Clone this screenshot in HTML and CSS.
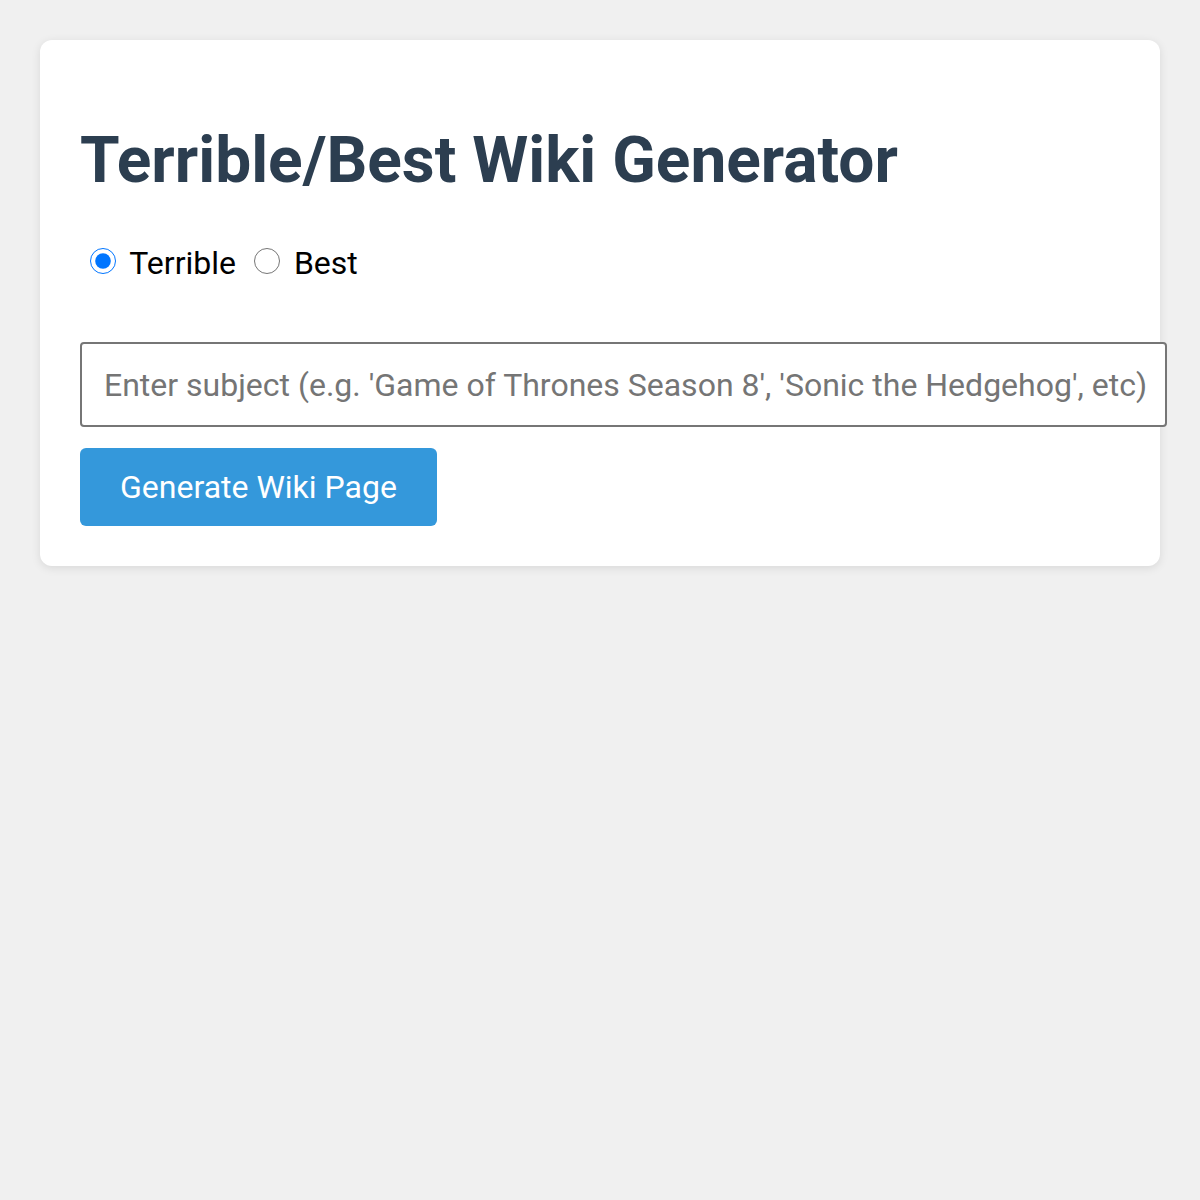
FILE: index.html
```html
<!DOCTYPE html>
<html lang="en">
  <head>
    <meta charset="UTF-8" />
    <meta name="viewport" content="width=device-width, initial-scale=1.0" />
    <title>Terrible/Best Wiki Generator</title>
    <link rel="stylesheet" href="styles.css">
  </head>
  <body>
    <div class="container">
      <h1>Terrible/Best Wiki Generator</h1>
      <div class="mode">
        <input type="radio" name="mode" id="terrible" value="terrible" checked />
        <label for="terrible">Terrible</label>
        <input type="radio" name="mode" id="best" value="best" />
        <label for="best">Best</label>
      </div>
      <input type="text" id="subject" placeholder="Enter subject (e.g. 'Game of Thrones Season 8', 'Sonic the Hedgehog', etc)" />
      <button type="button" class="generate">Generate Wiki Page</button>
    </div>
  </body>
</html>
```

FILE: styles.css
```css
* {
  box-sizing: border-box;
}

body {
  margin: 0;
  padding: 40px;
  background-color: #f0f0f0;
  font-family: Roboto, "Liberation Sans", Arial, sans-serif;
  font-size: 32px;
}

.container {
  background-color: #fff;
  padding: 40px;
  border-radius: 12px;
  box-shadow: 0 2px 10px rgba(0, 0, 0, 0.1);
}

h1 {
  font-size: 64px;
  font-weight: bold;
  color: #2c3e50;
  margin: 43px 0 44px;
}

.mode {
  margin-bottom: 60px;
  line-height: normal;
}

.mode input[type="radio"] {
  width: 26px;
  height: 26px;
  margin: 6px 6px 0 10px;
}

.mode label {
  color: #000;
}

/* the field overflows the card a little, as in the original */
#subject {
  display: block;
  width: calc(100% + 47px);
  height: 85px;
  padding: 0 12px 0 22px;
  border: 2px solid #767676;
  border-radius: 4px;
  font-family: inherit;
  font-size: 32px;
  outline: none;
}

#subject::placeholder {
  color: #757575;
}

.generate {
  margin-top: 21px;
  padding: 20px 40px;
  background-color: #3498db;
  color: #fff;
  border: none;
  border-radius: 6px;
  font-family: inherit;
  font-size: 32px;
  cursor: pointer;
}

.generate:hover {
  opacity: 0.9;
}
```
